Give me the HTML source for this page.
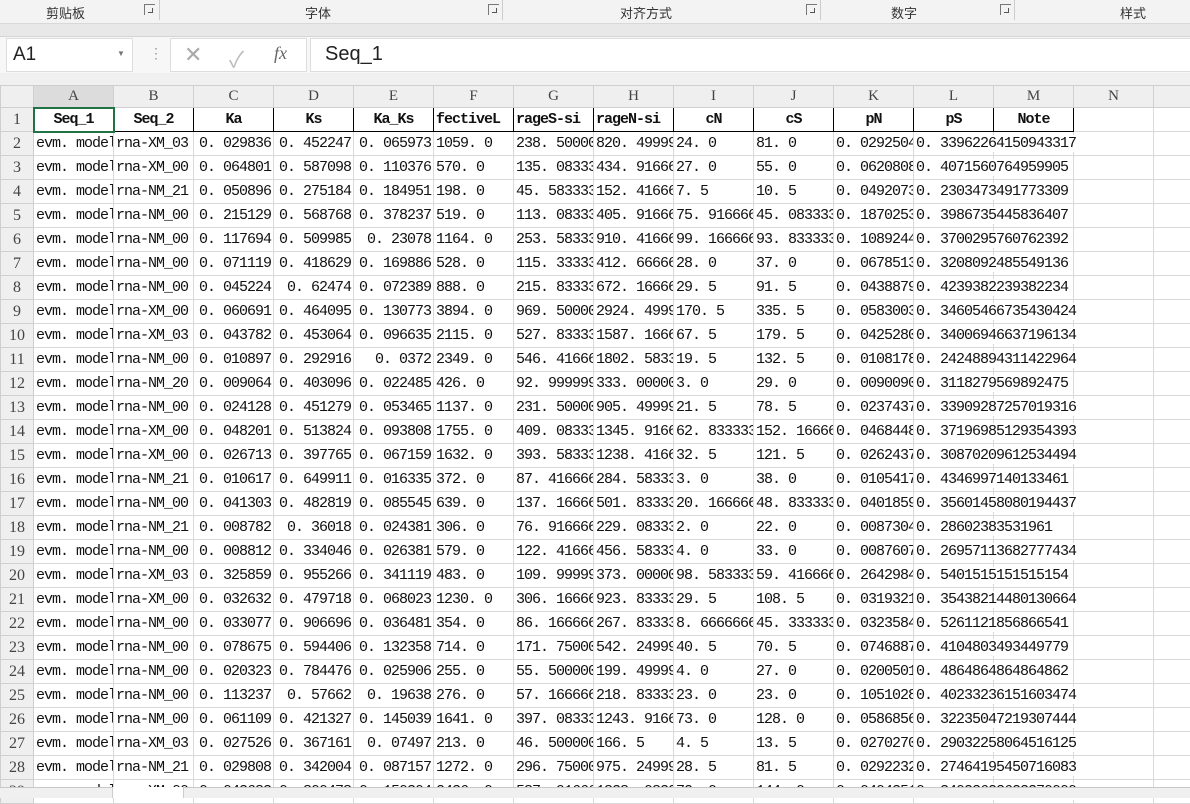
<!DOCTYPE html>
<html><head><meta charset="utf-8"><style>
body{margin:0;width:1190px;height:797px;overflow:hidden;background:#fff;position:relative;font-family:"Liberation Sans","Noto Sans CJK SC",sans-serif}
.rib{position:absolute;left:0;top:0;width:1190px;height:23px;background:#f3f3f3;border-bottom:1px solid #d8d8d8}
.rib span{position:absolute;top:3px;font-size:13px;color:#333}
.rib i{position:absolute;top:4px;width:10px;height:10px;border:1px solid #777;border-width:1px 0 0 1px;font-size:0}
.rib i:after{content:"";position:absolute;left:3px;top:3px;width:4px;height:4px;border-right:1px solid #555;border-bottom:1px solid #555}
.rib b{position:absolute;top:0;width:1px;height:20px;background:#ccc}
.band{position:absolute;left:0;top:24px;width:1190px;height:12px;background:#e8e8e8}
.fbar{position:absolute;left:0;top:36px;width:1190px;height:36px;background:#f7f7f7;border-top:1px solid #d4d4d4;border-bottom:1px solid #d4d4d4}
.box{position:absolute;top:1px;height:32px;background:#fff;border:1px solid #ddd}
.band2{position:absolute;left:0;top:73px;width:1190px;height:12px;background:#f0f0f0}
table{position:absolute;left:0;top:85px;width:1193px;border-collapse:collapse;table-layout:fixed;font-family:"Liberation Mono",monospace;font-size:15px;letter-spacing:-1px;color:#111}
td{border:1px solid #d9d9d9;height:23px;padding:0 2px;white-space:nowrap;overflow:hidden;text-align:left}
tr.h td{background:#efefef;height:21px;text-align:center;font-family:"Liberation Serif",serif;font-size:15px;color:#444;letter-spacing:0;border-color:#cfcfcf}
td:first-child{background:#efefef;text-align:center;color:#444;font-family:"Liberation Serif",serif;font-size:16px;letter-spacing:0;border-color:#cfcfcf}
td:nth-child(4),td:nth-child(5),td:nth-child(6){text-align:right}
td:nth-child(13){overflow:visible;position:relative}
td:nth-child(13) span{position:relative;z-index:2;background:#fff;padding-right:2px}
tr.r1 td{font-weight:bold;text-align:center;border:1px solid #000}
tr.r1 td:first-child{font-weight:normal;border-color:#cfcfcf}
tr.r1 td:nth-child(15){border:1px solid #d9d9d9;border-left:1px solid #000}
.sel{outline:2px solid #217346;outline-offset:-1px}
.tabs{position:absolute;left:0;top:787px;width:1190px;height:10px;background:#f0f0f0;border-top:1px solid #c8c8c8;z-index:10}
</style></head><body>
<div class="rib">
<span style="left:46px">剪贴板</span><i style="left:144px"></i><b style="left:159px"></b>
<span style="left:305px">字体</span><i style="left:488px"></i><b style="left:502px"></b>
<span style="left:620px">对齐方式</span><i style="left:806px"></i><b style="left:820px"></b>
<span style="left:891px">数字</span><i style="left:1000px"></i><b style="left:1014px"></b>
<span style="left:1120px">样式</span>
</div>
<div class="band"></div>
<div class="fbar">
<div class="box" style="left:6px;width:125px"><span style="position:absolute;left:6px;top:5px;font-size:19px;color:#222">A1</span><span style="position:absolute;left:110px;top:10px;font-size:8px;color:#777">▼</span></div>
<span style="position:absolute;left:149px;top:8px;color:#999;font-size:14px">⋮</span>
<div class="box" style="left:170px;width:135px"><span style="position:absolute;left:13px;top:3px;font-size:22px;color:#aaa">✕</span><span style="position:absolute;left:58px;top:3px;font-size:22px;color:#bbb">✓</span><span style="position:absolute;left:103px;top:4px;font-size:18px;color:#666;font-family:'Liberation Serif',serif;font-style:italic">fx</span></div>
<div class="box" style="left:310px;width:880px"><span style="position:absolute;left:14px;top:4px;font-size:20px;color:#222">Seq_1</span></div>
</div>
<div class="band2"></div>
<table>
<colgroup><col style="width:33px"><col style="width:80px"><col style="width:80px"><col style="width:80px"><col style="width:80px"><col style="width:80px"><col style="width:80px"><col style="width:80px"><col style="width:80px"><col style="width:80px"><col style="width:80px"><col style="width:80px"><col style="width:80px"><col style="width:80px"><col style="width:80px"><col style="width:40px"></colgroup>
<tr class="h"><td style="font-size:0">◢</td><td style="background:#dcdcdc">A</td><td>B</td><td>C</td><td>D</td><td>E</td><td>F</td><td>G</td><td>H</td><td>I</td><td>J</td><td>K</td><td>L</td><td>M</td><td>N</td><td></td></tr>
<tr class="r1"><td>1</td><td class="sel">Seq_1</td><td>Seq_2</td><td>Ka</td><td>Ks</td><td>Ka_Ks</td><td style="text-align:left">fectiveL</td><td style="text-align:left">rageS-si</td><td style="text-align:left">rageN-si</td><td>cN</td><td>cS</td><td>pN</td><td>pS</td><td>Note</td><td></td><td style="border:1px solid #d9d9d9"></td></tr>
<tr><td>2</td><td>evm. model</td><td>rna-XM_03</td><td>0. 029836</td><td>0. 452247</td><td>0. 065973</td><td>1059. 0</td><td>238. 50000</td><td>820. 49999</td><td>24. 0</td><td>81. 0</td><td>0. 0292504</td><td><span>0. 33962264150943317</span></td><td></td><td></td><td></td></tr>
<tr><td>3</td><td>evm. model</td><td>rna-XM_00</td><td>0. 064801</td><td>0. 587098</td><td>0. 110376</td><td>570. 0</td><td>135. 08333</td><td>434. 91666</td><td>27. 0</td><td>55. 0</td><td>0. 0620808</td><td><span>0. 4071560764959905</span></td><td></td><td></td><td></td></tr>
<tr><td>4</td><td>evm. model</td><td>rna-NM_21</td><td>0. 050896</td><td>0. 275184</td><td>0. 184951</td><td>198. 0</td><td>45. 583333</td><td>152. 41666</td><td>7. 5</td><td>10. 5</td><td>0. 0492073</td><td><span>0. 2303473491773309</span></td><td></td><td></td><td></td></tr>
<tr><td>5</td><td>evm. model</td><td>rna-NM_00</td><td>0. 215129</td><td>0. 568768</td><td>0. 378237</td><td>519. 0</td><td>113. 08333</td><td>405. 91666</td><td>75. 916666</td><td>45. 083333</td><td>0. 1870253</td><td><span>0. 3986735445836407</span></td><td></td><td></td><td></td></tr>
<tr><td>6</td><td>evm. model</td><td>rna-NM_00</td><td>0. 117694</td><td>0. 509985</td><td>0. 23078</td><td>1164. 0</td><td>253. 58333</td><td>910. 41666</td><td>99. 166666</td><td>93. 833333</td><td>0. 1089244</td><td><span>0. 3700295760762392</span></td><td></td><td></td><td></td></tr>
<tr><td>7</td><td>evm. model</td><td>rna-NM_00</td><td>0. 071119</td><td>0. 418629</td><td>0. 169886</td><td>528. 0</td><td>115. 33333</td><td>412. 66666</td><td>28. 0</td><td>37. 0</td><td>0. 0678513</td><td><span>0. 3208092485549136</span></td><td></td><td></td><td></td></tr>
<tr><td>8</td><td>evm. model</td><td>rna-NM_00</td><td>0. 045224</td><td>0. 62474</td><td>0. 072389</td><td>888. 0</td><td>215. 83333</td><td>672. 16666</td><td>29. 5</td><td>91. 5</td><td>0. 0438879</td><td><span>0. 4239382239382234</span></td><td></td><td></td><td></td></tr>
<tr><td>9</td><td>evm. model</td><td>rna-XM_00</td><td>0. 060691</td><td>0. 464095</td><td>0. 130773</td><td>3894. 0</td><td>969. 50000</td><td>2924. 4999</td><td>170. 5</td><td>335. 5</td><td>0. 0583003</td><td><span>0. 34605466735430424</span></td><td></td><td></td><td></td></tr>
<tr><td>10</td><td>evm. model</td><td>rna-XM_03</td><td>0. 043782</td><td>0. 453064</td><td>0. 096635</td><td>2115. 0</td><td>527. 83333</td><td>1587. 1666</td><td>67. 5</td><td>179. 5</td><td>0. 0425280</td><td><span>0. 34006946637196134</span></td><td></td><td></td><td></td></tr>
<tr><td>11</td><td>evm. model</td><td>rna-NM_00</td><td>0. 010897</td><td>0. 292916</td><td>0. 0372</td><td>2349. 0</td><td>546. 41666</td><td>1802. 5833</td><td>19. 5</td><td>132. 5</td><td>0. 0108178</td><td><span>0. 24248894311422964</span></td><td></td><td></td><td></td></tr>
<tr><td>12</td><td>evm. model</td><td>rna-NM_20</td><td>0. 009064</td><td>0. 403096</td><td>0. 022485</td><td>426. 0</td><td>92. 999999</td><td>333. 00000</td><td>3. 0</td><td>29. 0</td><td>0. 0090090</td><td><span>0. 3118279569892475</span></td><td></td><td></td><td></td></tr>
<tr><td>13</td><td>evm. model</td><td>rna-NM_00</td><td>0. 024128</td><td>0. 451279</td><td>0. 053465</td><td>1137. 0</td><td>231. 50000</td><td>905. 49999</td><td>21. 5</td><td>78. 5</td><td>0. 0237437</td><td><span>0. 33909287257019316</span></td><td></td><td></td><td></td></tr>
<tr><td>14</td><td>evm. model</td><td>rna-XM_00</td><td>0. 048201</td><td>0. 513824</td><td>0. 093808</td><td>1755. 0</td><td>409. 08333</td><td>1345. 9166</td><td>62. 833333</td><td>152. 16666</td><td>0. 0468448</td><td><span>0. 37196985129354393</span></td><td></td><td></td><td></td></tr>
<tr><td>15</td><td>evm. model</td><td>rna-XM_00</td><td>0. 026713</td><td>0. 397765</td><td>0. 067159</td><td>1632. 0</td><td>393. 58333</td><td>1238. 4166</td><td>32. 5</td><td>121. 5</td><td>0. 0262437</td><td><span>0. 30870209612534494</span></td><td></td><td></td><td></td></tr>
<tr><td>16</td><td>evm. model</td><td>rna-NM_21</td><td>0. 010617</td><td>0. 649911</td><td>0. 016335</td><td>372. 0</td><td>87. 416666</td><td>284. 58333</td><td>3. 0</td><td>38. 0</td><td>0. 0105417</td><td><span>0. 4346997140133461</span></td><td></td><td></td><td></td></tr>
<tr><td>17</td><td>evm. model</td><td>rna-NM_00</td><td>0. 041303</td><td>0. 482819</td><td>0. 085545</td><td>639. 0</td><td>137. 16666</td><td>501. 83333</td><td>20. 166666</td><td>48. 833333</td><td>0. 0401859</td><td><span>0. 35601458080194437</span></td><td></td><td></td><td></td></tr>
<tr><td>18</td><td>evm. model</td><td>rna-NM_21</td><td>0. 008782</td><td>0. 36018</td><td>0. 024381</td><td>306. 0</td><td>76. 916666</td><td>229. 08333</td><td>2. 0</td><td>22. 0</td><td>0. 0087304</td><td><span>0. 28602383531961</span></td><td></td><td></td><td></td></tr>
<tr><td>19</td><td>evm. model</td><td>rna-NM_00</td><td>0. 008812</td><td>0. 334046</td><td>0. 026381</td><td>579. 0</td><td>122. 41666</td><td>456. 58333</td><td>4. 0</td><td>33. 0</td><td>0. 0087607</td><td><span>0. 26957113682777434</span></td><td></td><td></td><td></td></tr>
<tr><td>20</td><td>evm. model</td><td>rna-XM_03</td><td>0. 325859</td><td>0. 955266</td><td>0. 341119</td><td>483. 0</td><td>109. 99999</td><td>373. 00000</td><td>98. 583333</td><td>59. 416666</td><td>0. 2642984</td><td><span>0. 5401515151515154</span></td><td></td><td></td><td></td></tr>
<tr><td>21</td><td>evm. model</td><td>rna-XM_00</td><td>0. 032632</td><td>0. 479718</td><td>0. 068023</td><td>1230. 0</td><td>306. 16666</td><td>923. 83333</td><td>29. 5</td><td>108. 5</td><td>0. 0319321</td><td><span>0. 35438214480130664</span></td><td></td><td></td><td></td></tr>
<tr><td>22</td><td>evm. model</td><td>rna-NM_00</td><td>0. 033077</td><td>0. 906696</td><td>0. 036481</td><td>354. 0</td><td>86. 166666</td><td>267. 83333</td><td>8. 6666666</td><td>45. 333333</td><td>0. 0323584</td><td><span>0. 5261121856866541</span></td><td></td><td></td><td></td></tr>
<tr><td>23</td><td>evm. model</td><td>rna-NM_00</td><td>0. 078675</td><td>0. 594406</td><td>0. 132358</td><td>714. 0</td><td>171. 75000</td><td>542. 24999</td><td>40. 5</td><td>70. 5</td><td>0. 0746887</td><td><span>0. 4104803493449779</span></td><td></td><td></td><td></td></tr>
<tr><td>24</td><td>evm. model</td><td>rna-NM_00</td><td>0. 020323</td><td>0. 784476</td><td>0. 025906</td><td>255. 0</td><td>55. 500000</td><td>199. 49999</td><td>4. 0</td><td>27. 0</td><td>0. 0200501</td><td><span>0. 4864864864864862</span></td><td></td><td></td><td></td></tr>
<tr><td>25</td><td>evm. model</td><td>rna-NM_00</td><td>0. 113237</td><td>0. 57662</td><td>0. 19638</td><td>276. 0</td><td>57. 166666</td><td>218. 83333</td><td>23. 0</td><td>23. 0</td><td>0. 1051028</td><td><span>0. 40233236151603474</span></td><td></td><td></td><td></td></tr>
<tr><td>26</td><td>evm. model</td><td>rna-NM_00</td><td>0. 061109</td><td>0. 421327</td><td>0. 145039</td><td>1641. 0</td><td>397. 08333</td><td>1243. 9166</td><td>73. 0</td><td>128. 0</td><td>0. 0586856</td><td><span>0. 32235047219307444</span></td><td></td><td></td><td></td></tr>
<tr><td>27</td><td>evm. model</td><td>rna-XM_03</td><td>0. 027526</td><td>0. 367161</td><td>0. 07497</td><td>213. 0</td><td>46. 500000</td><td>166. 5</td><td>4. 5</td><td>13. 5</td><td>0. 0270270</td><td><span>0. 29032258064516125</span></td><td></td><td></td><td></td></tr>
<tr><td>28</td><td>evm. model</td><td>rna-NM_21</td><td>0. 029808</td><td>0. 342004</td><td>0. 087157</td><td>1272. 0</td><td>296. 75000</td><td>975. 24999</td><td>28. 5</td><td>81. 5</td><td>0. 0292232</td><td><span>0. 27464195450716083</span></td><td></td><td></td><td></td></tr>
<tr><td>29</td><td>evm. model</td><td>rna-XM_00</td><td>0. 043683</td><td>0. 800478</td><td>0. 150304</td><td>2436. 0</td><td>587. 91666</td><td>1838. 0833</td><td>72. 0</td><td>144. 0</td><td>0. 0404351</td><td><span>0. 34023623623370000</span></td><td></td><td></td><td></td></tr>
</table>
<div class="tabs"><div style="position:absolute;left:112px;top:-1px;width:70px;height:11px;background:#fff;border-left:1px solid #ccc;border-right:1px solid #ccc"></div></div>
</body></html>
